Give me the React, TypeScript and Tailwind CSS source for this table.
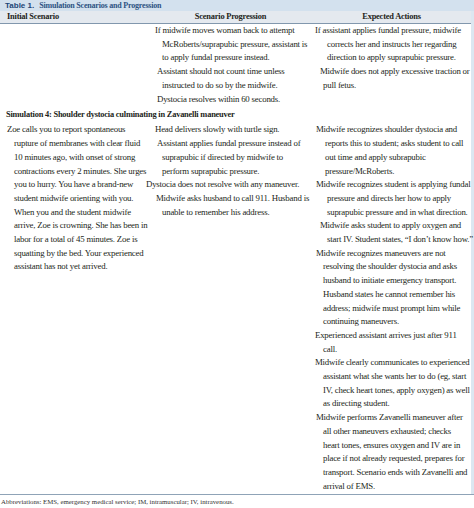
type Para = { lines: string[]; first: string; rest: string };

const row1: Para[][] = [
  [],
  [
    {
      lines: ["If midwife moves woman back to attempt", "McRoberts/suprapubic pressure, assistant is", "to apply fundal pressure instead."],
      first: "pl-[5px]",
      rest: "pl-[12px]",
    },
    { lines: ["Assistant should not count time unless", "instructed to do so by the midwife."], first: "pl-[7px]", rest: "pl-[12px]" },
    { lines: ["Dystocia resolves within 60 seconds."], first: "pl-[7px]", rest: "pl-[12px]" },
  ],
  [
    {
      lines: ["If assistant applies fundal pressure, midwife", "corrects her and instructs her regarding", "direction to apply suprapubic pressure."],
      first: "pl-[4px]",
      rest: "pl-[16px]",
    },
    { lines: ["Midwife does not apply excessive traction or", "pull fetus."], first: "pl-[9px]", rest: "pl-[12px]" },
  ],
];

const row2: Para[][] = [
  [
    {
      lines: [
        "Zoe calls you to report spontaneous",
        "rupture of membranes with clear fluid",
        "10 minutes ago, with onset of strong",
        "contractions every 2 minutes. She urges",
        "you to hurry. You have a brand-new",
        "student midwife orienting with you.",
        "When you and the student midwife",
        "arrive, Zoe is crowning. She has been in",
        "labor for a total of 45 minutes. Zoe is",
        "squatting by the bed. Your experienced",
        "assistant has not yet arrived.",
      ],
      first: "pl-[7px]",
      rest: "pl-[14px]",
    },
  ],
  [
    { lines: ["Head delivers slowly with turtle sign."], first: "pl-[5px]", rest: "pl-[12px]" },
    {
      lines: ["Assistant applies fundal pressure instead of", "suprapubic if directed by midwife to", "perform suprapubic pressure."],
      first: "pl-[7px]",
      rest: "pl-[12px]",
    },
    { lines: ["Dystocia does not resolve with any maneuver."], first: "-ml-[4px]", rest: "pl-[12px]" },
    {
      lines: ["Midwife asks husband to call 911. Husband is", "unable to remember his address."],
      first: "pl-[6px]",
      rest: "pl-[12px]",
    },
  ],
  [
    {
      lines: [
        "Midwife recognizes shoulder dystocia and",
        "reports this to student; asks student to call",
        "out time and apply subrapubic",
        "pressure/McRoberts.",
      ],
      first: "pl-[5px]",
      rest: "pl-[14px]",
    },
    {
      lines: [
        "Midwife recognizes student is applying fundal",
        "pressure and directs her how to apply",
        "suprapubic pressure and in what direction.",
      ],
      first: "pl-[5px]",
      rest: "pl-[16px]",
    },
    {
      lines: ["Midwife asks student to apply oxygen and", "start IV. Student states, \u201cI don\u2019t know how.\u201d"],
      first: "pl-[9px]",
      rest: "pl-[16px]",
    },
    {
      lines: [
        "Midwife recognizes maneuvers are not",
        "resolving the shoulder dystocia and asks",
        "husband to initiate emergency transport.",
        "Husband states he cannot remember his",
        "address; midwife must prompt him while",
        "continuing maneuvers.",
      ],
      first: "pl-[5px]",
      rest: "pl-[12px]",
    },
    { lines: ["Experienced assistant arrives just after 911", "call."], first: "pl-[4px]", rest: "pl-[12px]" },
    {
      lines: [
        "Midwife clearly communicates to experienced",
        "assistant what she wants her to do (eg, start",
        "IV, check heart tones, apply oxygen) as well",
        "as directing student.",
      ],
      first: "pl-[4px]",
      rest: "pl-[12px]",
    },
    {
      lines: [
        "Midwife performs Zavanelli maneuver after",
        "all other maneuvers exhausted; checks",
        "heart tones, ensures oxygen and IV are in",
        "place if not already requested, prepares for",
        "transport. Scenario ends with Zavanelli and",
        "arrival of EMS.",
      ],
      first: "pl-[5px]",
      rest: "pl-[12px]",
    },
  ],
];

const Cell = ({ paras }: { paras: Para[] }) => (
  <div className="flex flex-col">
    {paras.map((p, i) => (
      <div key={i}>
        {p.lines.map((l, j) => (
          <div key={j} className={`whitespace-nowrap ${j === 0 ? p.first : p.rest}`}>
            {l}
          </div>
        ))}
      </div>
    ))}
  </div>
);

const Row = ({ cells }: { cells: Para[][] }) => (
  <div className="grid grid-cols-[150px_161px_161px]">
    {cells.map((c, i) => (
      <Cell key={i} paras={c} />
    ))}
  </div>
);

export default function App() {
  return (
    <div className="w-[474px] h-[508px] bg-white text-[#231f20] font-['Liberation_Serif',serif] overflow-hidden">
      <div className="h-[11px] bg-[#d3e1ee] flex items-center gap-[5px] px-[5px] text-[#1e4677]">
        <span className="font-['Liberation_Sans',sans-serif] font-bold text-[8px] leading-none">Table 1.</span>
        <span className="font-bold text-[8px] tracking-[-0.2px] leading-none text-[#2e5383]">Simulation Scenarios and Progression</span>
      </div>
      <div className="border-r-[3px] border-[#dce7f1]">
        <div className="grid grid-cols-[150px_161px_161px] h-[13px] bg-[#e4e9ef] border-b border-[#8197ad] items-center font-bold text-[8.4px] tracking-[-0.2px] leading-none">
          <div className="pl-[7px]">Initial Scenario</div>
          <div className="text-center">Scenario Progression</div>
          <div className="text-center">Expected Actions</div>
        </div>
        <div className="text-[8.8px] tracking-[-0.2px] leading-[13.7px] pb-[1px]">
          <Row cells={row1} />
          <div className="pt-[2px] pb-[1.5px] pl-[6px] font-bold text-[8.4px]">
            Simulation 4: Shoulder dystocia culminating in Zavanelli maneuver
          </div>
          <Row cells={row2} />
        </div>
      </div>
      <div className="border-t border-[#8fa3b7] pt-[3px] pl-[1px] text-[6.8px] leading-[8px] text-[#333]">
        Abbreviations: EMS, emergency medical service; IM, intramuscular; IV, intravenous.
      </div>
    </div>
  );
}
